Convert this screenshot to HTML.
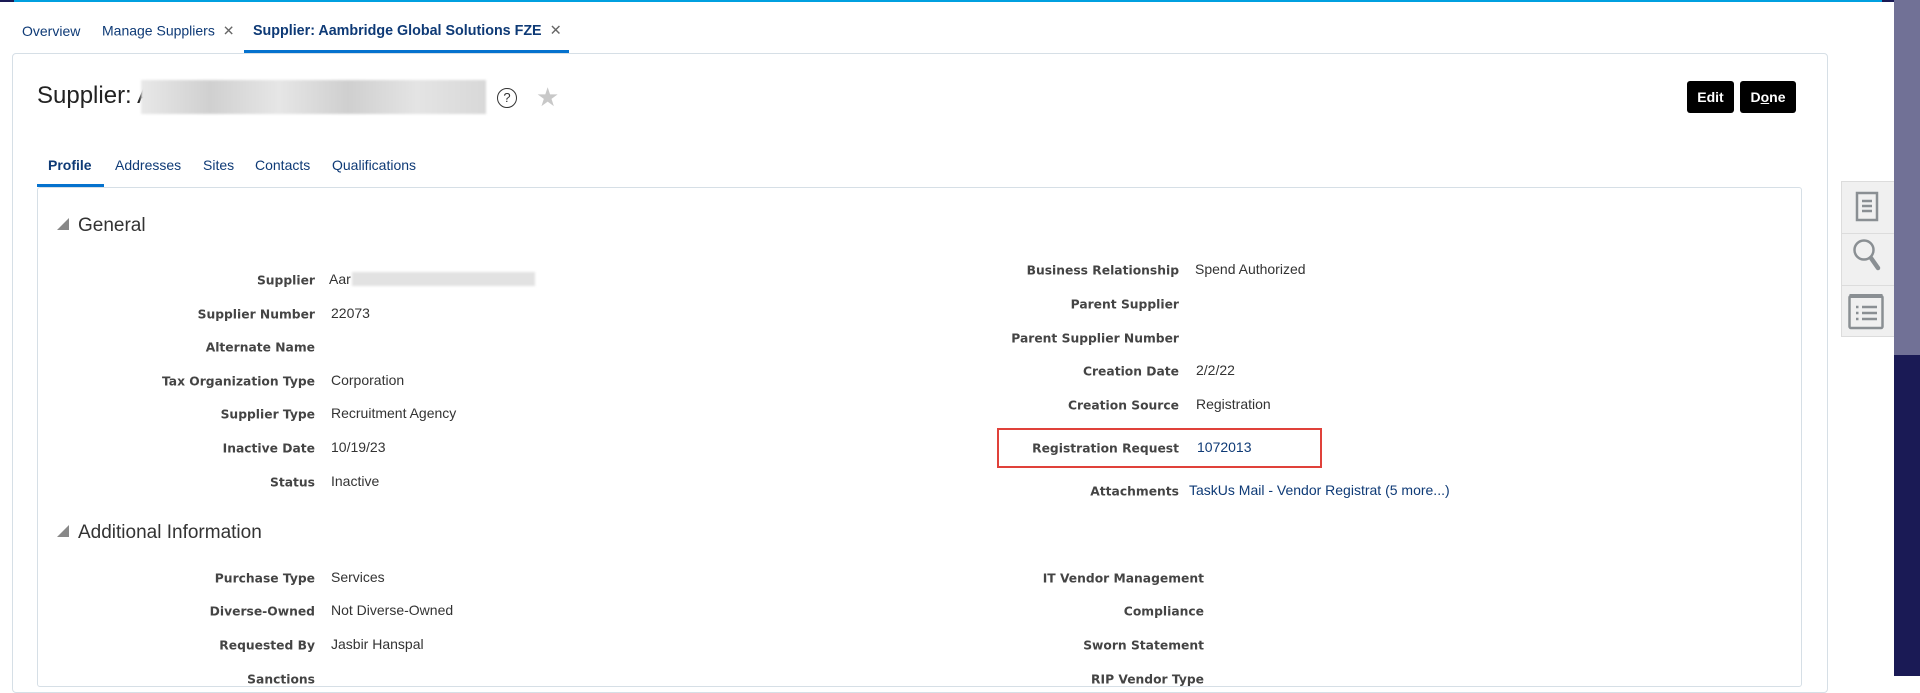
<!DOCTYPE html>
<html><head><meta charset="utf-8"><style>
*{margin:0;padding:0;box-sizing:border-box}
body{width:1920px;height:676px;overflow:hidden;background:#fff;font-family:"Liberation Sans",Arial,sans-serif;position:relative;color:#333}
.a{position:absolute;white-space:nowrap}
.lbl{position:absolute;font-family:"DejaVu Sans",Verdana,sans-serif;font-weight:bold;font-size:12.3px;color:#444;text-align:right;transform:translateY(-40%);white-space:nowrap}
.val{position:absolute;font-size:14px;color:#333;transform:translateY(-50%);white-space:nowrap}
.lnk{color:#0e3a76}
.tab{font-size:14px;color:#0e3a76;transform:translateY(-50%)}
.tri{position:absolute;width:0;height:0;border-left:12px solid transparent;border-bottom:12px solid #888}
.h{position:absolute;font-size:19px;color:#333;transform:translateY(-50%)}
</style></head><body>
<div class="a" style="left:0;top:0;width:14px;height:2px;background:#1a1a55"></div>
<div class="a" style="left:14px;top:0;width:1868px;height:2px;background:#00a0e0"></div>
<div class="a" style="left:1882px;top:0;width:12px;height:2px;background:#1a1a55"></div>
<div class="a" style="left:1894px;top:0;width:26px;height:355px;background:#717196"></div>
<div class="a" style="left:1894px;top:355px;width:26px;height:321px;background:#1a1a55"></div>

<div class="a tab" style="left:22px;top:31px">Overview</div>
<div class="a tab" style="left:102px;top:31px">Manage Suppliers <span style="color:#666;margin-left:4px">✕</span></div>
<div class="a tab" style="left:253px;top:31px;font-weight:bold;font-size:14.3px">Supplier: Aambridge Global Solutions FZE <span style="color:#666;font-weight:normal;margin-left:4px">✕</span></div>
<div class="a" style="left:244px;top:50px;width:325px;height:3px;background:#0572ce"></div>

<div class="a" style="left:12px;top:53px;width:1816px;height:640px;border:1px solid #d6dfe6;border-radius:4px"></div>

<div class="a" style="left:37px;top:82px;font-size:24px;color:#222">Supplier: A</div>
<div class="a" style="left:141px;top:80px;width:345px;height:34px;background:linear-gradient(90deg,#e8e8e8,#d0d0d0 20%,#e6e6e6 40%,#cfcfcf 60%,#e4e4e4 80%,#d8d8d8);filter:blur(1px)"></div>
<div class="a" style="left:497px;top:88px;width:20px;height:20px;border:1.5px solid #333;border-radius:50%;font-size:13px;text-align:center;line-height:17px;color:#333">?</div>
<div class="a" style="left:536px;top:82px;font-size:26px;color:#c8c8c8">★</div>

<div class="a" style="left:1687px;top:81px;width:47px;height:32px;background:#000;border-radius:3px;color:#fff;font-weight:bold;font-size:14px;text-align:center;line-height:32px">Edit</div>
<div class="a" style="left:1740px;top:81px;width:56px;height:32px;background:#000;border-radius:3px;color:#fff;font-weight:bold;font-size:14px;text-align:center;line-height:32px">D<u>o</u>ne</div>

<div class="a tab" style="left:48px;top:165px;font-weight:bold">Profile</div>
<div class="a tab" style="left:115px;top:165px">Addresses</div>
<div class="a tab" style="left:203px;top:165px">Sites</div>
<div class="a tab" style="left:255px;top:165px">Contacts</div>
<div class="a tab" style="left:332px;top:165px">Qualifications</div>
<div class="a" style="left:37px;top:184px;width:67px;height:3px;background:#0572ce"></div>
<div class="a" style="left:37px;top:187px;width:1765px;height:500px;border:1px solid #d6dfe6;border-radius:3px"></div>

<div class="tri" style="left:57px;top:218px"></div>
<div class="h" style="left:78px;top:226px">General</div>
<div class="tri" style="left:57px;top:525px"></div>
<div class="h" style="left:78px;top:533px">Additional Information</div>

<div class="lbl" style="right:1605px;top:279px">Supplier</div>
<div class="val" style="left:329px;top:279px">Aar</div>
<div class="a" style="left:352px;top:272px;width:183px;height:14px;background:#e2e2e2;filter:blur(1px)"></div>
<div class="lbl" style="right:1605px;top:313px">Supplier Number</div><div class="val" style="left:331px;top:313px">22073</div>
<div class="lbl" style="right:1605px;top:346px">Alternate Name</div>
<div class="lbl" style="right:1605px;top:380px">Tax Organization Type</div><div class="val" style="left:331px;top:380px">Corporation</div>
<div class="lbl" style="right:1605px;top:413px">Supplier Type</div><div class="val" style="left:331px;top:413px">Recruitment Agency</div>
<div class="lbl" style="right:1605px;top:447px">Inactive Date</div><div class="val" style="left:331px;top:447px">10/19/23</div>
<div class="lbl" style="right:1605px;top:481px">Status</div><div class="val" style="left:331px;top:481px">Inactive</div>

<div class="lbl" style="right:1605px;top:577px">Purchase Type</div><div class="val" style="left:331px;top:577px">Services</div>
<div class="lbl" style="right:1605px;top:610px">Diverse-Owned</div><div class="val" style="left:331px;top:610px">Not Diverse-Owned</div>
<div class="lbl" style="right:1605px;top:644px">Requested By</div><div class="val" style="left:331px;top:644px">Jasbir Hanspal</div>
<div class="lbl" style="right:1605px;top:678px">Sanctions</div>

<div class="lbl" style="right:741px;top:269px">Business Relationship</div><div class="val" style="left:1195px;top:269px">Spend Authorized</div>
<div class="lbl" style="right:741px;top:303px">Parent Supplier</div>
<div class="lbl" style="right:741px;top:337px">Parent Supplier Number</div>
<div class="lbl" style="right:741px;top:370px">Creation Date</div><div class="val" style="left:1196px;top:370px">2/2/22</div>
<div class="lbl" style="right:741px;top:404px">Creation Source</div><div class="val" style="left:1196px;top:404px">Registration</div>
<div class="lbl" style="right:741px;top:447px">Registration Request</div><div class="val lnk" style="left:1197px;top:447px">1072013</div>
<div class="a" style="left:997px;top:428px;width:325px;height:40px;border:2.5px solid #e0413a"></div>
<div class="lbl" style="right:741px;top:490px">Attachments</div><div class="val lnk" style="left:1189px;top:490px">TaskUs Mail - Vendor Registrat (5 more...)</div>

<div class="lbl" style="right:716px;top:577px">IT Vendor Management</div>
<div class="lbl" style="right:716px;top:610px">Compliance</div>
<div class="lbl" style="right:716px;top:644px">Sworn Statement</div>
<div class="lbl" style="right:716px;top:678px">RIP Vendor Type</div>

<div class="a" style="left:1841px;top:181px;width:53px;height:156px;background:#f0f0f0;border:1px solid #dcdcdc;border-right:none"></div>
<div class="a" style="left:1841px;top:233px;width:53px;height:1px;background:#dcdcdc"></div>
<div class="a" style="left:1841px;top:285px;width:53px;height:1px;background:#dcdcdc"></div>
<svg class="a" style="left:1841px;top:181px" width="53" height="156" viewBox="0 0 53 156" fill="none" stroke="#8a8f93" stroke-width="2.5">
<rect x="16" y="12" width="20" height="27"/><path d="M21 20h10M21 25h10M21 30h10"/>
<circle cx="23" cy="69" r="9.5"/><path d="M30 77l7 10" stroke-width="4.5" stroke-linecap="round"/>
<rect x="8.5" y="115" width="33" height="32" rx="1.5"/><path d="M8.5 115h33" stroke-width="4"/><path d="M15 126h2.5M15 132h2.5M15 138h2.5M21 126h15M21 132h15M21 138h15"/>
</svg>
</body></html>
